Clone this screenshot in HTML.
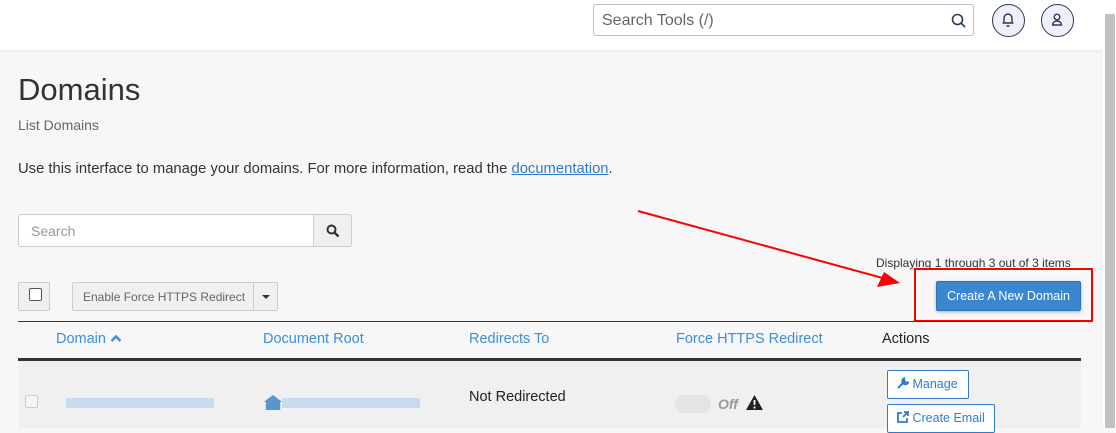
<!DOCTYPE html>
<html><head><meta charset="utf-8">
<style>
*{box-sizing:border-box;margin:0;padding:0}
body{width:1116px;height:428px;overflow:hidden;background:#f7f7f7;font-family:"Liberation Sans",sans-serif;color:#333;position:relative}
.hdr{position:absolute;left:0;top:0;width:1103px;height:50px;background:#fff;box-shadow:0 1px 3px rgba(0,0,0,.08)}
.sb{position:absolute;right:0;top:0;width:13px;height:428px;background:#fff}
.sb div{position:absolute;left:2px;top:14px;width:10px;height:414px;background:#c1c1c1}
.st{position:absolute;left:593px;top:4px;width:381px;height:32px;border:1px solid #b8bfcc;border-radius:3px;background:#fff;font-size:16px;color:#666;padding:7px 8px}
.circ{position:absolute;top:4px;width:33px;height:33px;border-radius:50%;border:1.5px solid #293a5c;background:#eef0fb}
a{color:#2f7ccc}
.ab{position:absolute}
.btn{position:absolute;border:1px solid #ccc;background:#f0f0f0;border-radius:2px}
.th{position:absolute;top:331px;font-size:14.5px;color:#3d8fdb}
.blur{position:absolute;height:10px;background:#c9d9ee}
.ob{position:absolute;border:1px solid #2f7ccc;border-radius:2px;background:#fff;color:#2f7ccc;font-size:12.5px;padding:0 6px 0 9px;height:29px;line-height:27px;white-space:nowrap}
</style></head><body>
<div class="hdr">
 <div class="st">Search Tools (/)
  <svg style="position:absolute;right:7px;top:8px" width="15" height="15" viewBox="0 0 15 15"><circle cx="6.5" cy="6.5" r="5" fill="none" stroke="#293a5c" stroke-width="1.6"/><path d="M10 10l4 4" stroke="#293a5c" stroke-width="1.6"/></svg></div>
 <div class="circ" style="left:992px"><svg width="30" height="30" viewBox="0 0 30 30"><path d="M11 18v-5a4 4 0 018 0v5zM9.5 18h11M13.5 21h3" fill="none" stroke="#293a5c" stroke-width="1.4"/></svg></div>
 <div class="circ" style="left:1041px"><svg width="30" height="30" viewBox="0 0 30 30"><circle cx="15" cy="12" r="2.8" fill="none" stroke="#293a5c" stroke-width="1.4"/><path d="M10.5 20a4.5 4 0 019 0z" fill="none" stroke="#293a5c" stroke-width="1.4"/></svg></div>
</div>
<div class="sb"><div></div></div>
<div class="ab" style="left:18px;top:72px;font-size:31px;color:#333">Domains</div>
<div class="ab" style="left:18px;top:117px;font-size:14px;color:#666">List Domains</div>
<div class="ab" style="left:18px;top:161px;font-size:14.8px">Use this interface to manage your domains. For more information, read the <a href="#">documentation</a>.</div>
<div class="ab" style="left:18px;top:214px;width:296px;height:33px;border:1px solid #ccc;border-right:none;border-radius:3px 0 0 3px;background:#fff;font-size:14px;color:#999;padding:8px 12px">Search</div>
<div class="btn" style="left:313px;top:214px;width:39px;height:33px;border-radius:0 3px 3px 0"><svg style="margin:9px 0 0 12px" width="14" height="14" viewBox="0 0 14 14"><circle cx="5.5" cy="5.5" r="4" fill="none" stroke="#333" stroke-width="2"/><path d="M8.5 8.5l4 4" stroke="#333" stroke-width="2.4"/></svg></div>
<div class="btn" style="left:18px;top:282px;width:32px;height:29px"><div style="margin:5px 0 0 10px;width:13px;height:13px;border:1px solid #555;border-radius:2px;background:#fff"></div></div>
<div class="btn" style="left:72px;top:282px;width:206px;height:29px;font-size:12px;color:#666;padding:7px 10px;white-space:nowrap">Enable Force HTTPS Redirect<div style="position:absolute;left:180px;top:0;width:1px;height:27px;background:#ccc"></div><div style="position:absolute;left:189px;top:12px;border:4px solid transparent;border-top-color:#333"></div></div>
<div class="ab" style="left:876px;top:256px;font-size:12px;color:#333">Displaying 1 through 3 out of 3 items</div>
<div class="ab" style="left:936px;top:281px;width:145px;height:30px;background:#3a87d0;border:1px solid #2f72b5;border-radius:2px;color:#fff;font-size:12.5px;line-height:28px;text-align:center;box-shadow:0 1px 3px rgba(0,0,0,.3)">Create A New Domain</div>
<div class="ab" style="left:914px;top:268px;width:179px;height:54px;border:2px solid #f00"></div>
<svg class="ab" style="left:0;top:0" width="1116" height="428"><path d="M638 211L890 280" stroke="#f00" stroke-width="2"/><path d="M900 283L877 287L884 272z" fill="#f00"/></svg>
<div class="ab" style="left:18px;top:321px;width:1063px;height:1px;background:#333"></div>
<div class="th" style="left:56px">Domain <svg width="12" height="10" viewBox="0 0 12 10"><path d="M1.5 8L6 3.5 10.5 8" fill="none" stroke="#3d8fdb" stroke-width="2.4"/></svg></div>
<div class="th" style="left:263px">Document Root</div>
<div class="th" style="left:469px">Redirects To</div>
<div class="th" style="left:676px">Force HTTPS Redirect</div>
<div class="th" style="left:882px;color:#222">Actions</div>
<div class="ab" style="left:18px;top:358px;width:1063px;height:3px;background:#333"></div>
<div class="ab" style="left:18px;top:361px;width:1063px;height:67px;background:#f0f0f0"></div>
<div class="ab" style="left:25px;top:395px;width:13px;height:13px;border:1px solid #ccc;border-radius:2px;background:#f5f5f5"></div>
<div class="blur" style="left:66px;top:398px;width:148px"></div>
<div class="ab" style="left:264px;top:395px;width:18px;height:15px;background:#5b95d0;clip-path:polygon(50% 0,100% 45%,90% 45%,90% 100%,10% 100%,10% 45%,0 45%)"></div>
<div class="blur" style="left:282px;top:398px;width:138px"></div>
<div class="ab" style="left:469px;top:389px;font-size:14.5px;color:#222">Not Redirected</div>
<div class="ab" style="left:675px;top:395px;width:36px;height:18px;border-radius:9px;background:#e4e4e4"></div>
<div class="ab" style="left:718px;top:396px;font-size:14px;font-style:italic;font-weight:bold;color:#999">Off</div>
<svg class="ab" style="left:746px;top:395px" width="17" height="15" viewBox="0 0 17 15"><path d="M8.5 0L17 15H0z" fill="#222"/><path d="M8.5 5v5M8.5 11.5v2" stroke="#fff" stroke-width="1.8"/></svg>
<div class="ob" style="left:887px;top:370px;width:82px"><svg width="12" height="12" viewBox="0 0 12 12" style="vertical-align:-1px"><path d="M1 11L6 6M7 1.5a3 3 0 104 4l-2 .3-1.5-1.5z" fill="#2f7ccc" stroke="#2f7ccc" stroke-width="2"/></svg> Manage</div>
<div class="ob" style="left:887px;top:404px;width:108px"><svg width="12" height="12" viewBox="0 0 12 12" style="vertical-align:-1px"><path d="M5 2H1v9h9V7M6 6l5-5M7 1h4v4" fill="none" stroke="#2f7ccc" stroke-width="1.8"/></svg> Create Email</div>
</body></html>
